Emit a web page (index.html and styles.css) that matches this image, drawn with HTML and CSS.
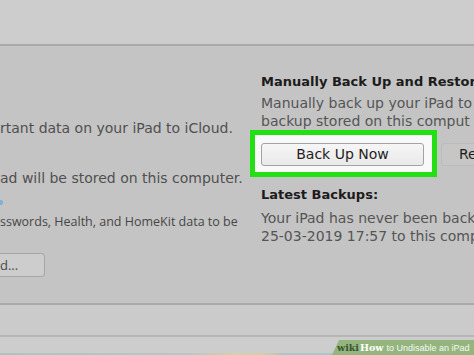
FILE: index.html
```html
<!DOCTYPE html>
<html>
<head>
<meta charset="utf-8">
<link rel="stylesheet" href="styles.css">
</head>
<body>
<div class="screen">
  <div class="topbar"></div>
  <div class="main">
    <div class="left">
      <p class="ltext l1">rtant data on your iPad to iCloud.</p>
      <p class="ltext l2">ad will be stored on this computer.</p>
      <span class="bluemark"></span>
      <p class="small">sswords, Health, and HomeKit data to be</p>
      <div class="lbtn">d...</div>
    </div>
    <div class="right">
      <h2 class="heading">Manually Back Up and Restore</h2>
      <p class="desc">Manually back up your iPad to<br>backup stored on this comput</p>
      <div class="btnrow">
        <div class="highlight"><div class="btn">Back Up Now</div></div>
        <div class="btn btn2">Re</div>
      </div>
      <h2 class="heading h-latest">Latest Backups:</h2>
      <p class="desc d2">Your iPad has never been back<br>25-03-2019 17:57 to this comp</p>
    </div>
  </div>
  <div class="band band1"></div>
  <div class="band band2"></div>
  <div class="strip"></div>
  <div class="watermark"><span class="wiki">wiki</span><span class="how">How</span><span class="title">to Undisable an iPad</span></div>
</div>
</body>
</html>
```
FILE: styles.css
```css
html, body {
  margin: 0;
  padding: 0;
}
body {
  width: 474px;
  height: 355px;
  overflow: hidden;
  background: #c4c4c4;
  font-family: "DejaVu Sans", Verdana, sans-serif;
}
.screen {
  position: relative;
  width: 474px;
  height: 355px;
  overflow: hidden;
  display: flex;
  flex-direction: column;
}
.topbar {
  height: 44px;
  background: #cdcdcd;
  border-bottom: 2px solid #a9a9a9;
  flex: none;
}
.main {
  height: 257px;
  flex: none;
  display: flex;
  background: #c4c4c4;
  border-bottom: 2px solid #aaaaaa;
}
.left {
  width: 250px;
  flex: none;
  display: flex;
  flex-direction: column;
  padding-top: 73px;
  box-sizing: border-box;
  white-space: nowrap;
  overflow: hidden;
}
.ltext {
  margin: 0;
  font-size: 14px;
  line-height: 18px;
  color: #505050;
}
.l2 {
  margin-top: 32px;
}
.bluemark {
  display: block;
  width: 3px;
  height: 5px;
  margin-top: 13px;
  background: #7fb0d8;
  border-radius: 0 2px 2px 0;
}
.small {
  margin: 9px 0 0;
  font-family: "Open Sans", sans-serif;
  font-size: 12.5px;
  line-height: 16px;
  color: #474747;
}
.lbtn {
  margin-top: 23px;
  width: 45px;
  height: 24px;
  box-sizing: border-box;
  background: #cdcdcd;
  border: 1px solid #a6a6a6;
  border-left: none;
  border-radius: 0 4px 4px 0;
  font-family: "Open Sans", sans-serif;
  font-size: 13px;
  line-height: 22px;
  color: #4a4a4a;
}
.right {
  flex: 1;
  min-width: 0;
  padding-top: 27px;
  display: flex;
  flex-direction: column;
  white-space: nowrap;
  overflow: hidden;
}
.heading {
  margin: 0 0 0 11px;
  font-size: 13px;
  font-weight: bold;
  line-height: 18px;
  color: #1c1c1c;
}
.desc {
  margin: 3px 0 0 11px;
  font-size: 14px;
  line-height: 18px;
  color: #555555;
}
.btnrow {
  display: flex;
  align-items: flex-start;
}
.highlight {
  width: 187px;
  height: 47px;
  box-sizing: border-box;
  border: 5px solid #22e012;
  background: #f9f9f9;
  padding: 8px 8px 0 6px;
  flex: none;
}
.btn {
  height: 23px;
  box-sizing: border-box;
  border: 1px solid #a3a3a3;
  border-radius: 3px;
  background: linear-gradient(#f6f6f6, #e9e9e9);
  font-size: 14px;
  line-height: 21px;
  text-align: center;
  color: #1e1e1e;
}
.btn2 {
  margin: 13px 0 0 4px;
  padding-left: 17px;
  text-align: left;
  flex: 1;
  border-right: none;
  border-radius: 3px 0 0 3px;
  background: #c6c6c6;
  border-color: #bcbcbc;
}
.h-latest {
  margin-top: 9px;
}
.d2 {
  margin-top: 5px;
}
.band {
  flex: none;
}
.band1 {
  height: 30px;
  background: #cbcbcb;
  border-bottom: 2px solid #b6b6b6;
}
.band2 {
  height: 16px;
  background: #cdcdcd;
}
.strip {
  flex: 1;
  background: linear-gradient(90deg, #a9c5c2 0%, #b2cac6 40%, #d8d1a6 50%, #d3cfab 55%, #a9c7c4 60%, #a6c6c2 100%);
}
.watermark {
  position: absolute;
  right: 0;
  bottom: 0;
  height: 15px;
  width: 142px;
  padding-left: 5px;
  box-sizing: border-box;
  background: #95b57f;
  clip-path: polygon(7px 0, 100% 0, 100% 100%, 0 100%);
  display: flex;
  align-items: center;
  white-space: nowrap;
}
.wiki {
  font-family: "DejaVu Serif", "Liberation Serif", serif;
  font-weight: bold;
  font-size: 9.5px;
  color: #38552c;
}
.how {
  font-family: "DejaVu Serif", "Liberation Serif", serif;
  font-weight: bold;
  font-size: 9.5px;
  color: #ffffff;
  margin-left: 1px;
}
.title {
  font-family: "Liberation Sans", Arial, sans-serif;
  font-size: 9px;
  color: #f4f8f0;
  margin-left: 3px;
}
```
